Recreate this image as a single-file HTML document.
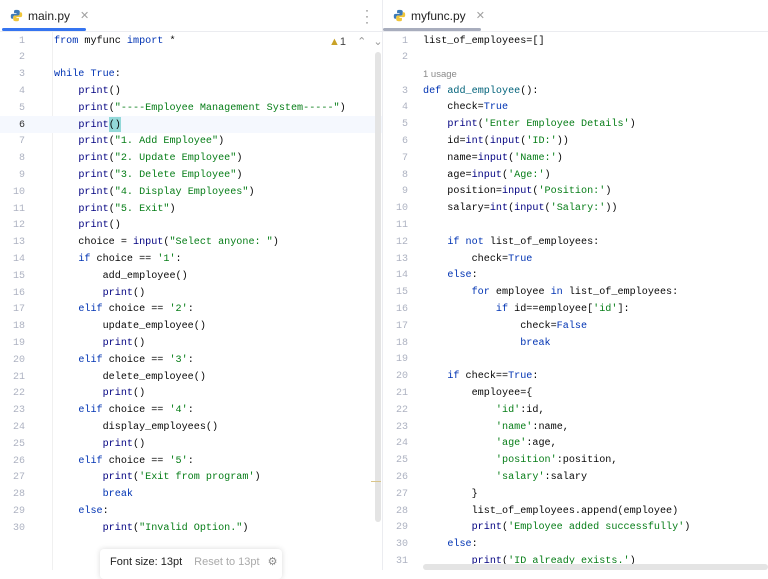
<!DOCTYPE html>
<html><head><meta charset="utf-8"><style>
*{margin:0;padding:0;box-sizing:border-box}
body{width:768px;height:570px;overflow:hidden;background:#fff;position:relative;font-family:"Liberation Sans",sans-serif}
.code{position:absolute;font-family:"Liberation Mono",monospace;font-size:10.15px;line-height:16.8px;white-space:pre;color:#080808}
.num{position:absolute;font-family:"Liberation Mono",monospace;font-size:10px;line-height:16.8px;white-space:pre;color:#aeb3c2;text-align:right}
.k{color:#0033b3}.s{color:#067d17}.p{color:#000080}
.tab{position:absolute;top:0;height:31px;font-size:12px;color:#222;display:flex;align-items:center}
.x{color:#a0a0a0;font-size:11px;margin-left:10px}
</style></head><body>
<!-- tabs -->
<div style="position:absolute;left:0;top:0;width:768px;height:32px;border-bottom:1px solid #ebecf0"></div>
<div class="tab" style="left:10px"><svg width="13" height="13" viewBox="0 0 16 16"><path d="M8 1C5 1 5 2 5 3v2h3v1H3C1 6 1 8 1 9s0 3 2 3h1v-2c0-1 1-2 2-2h4c1 0 2-1 2-2V3c0-1-1-2-4-2z" fill="#3d7ab8"/><path d="M8 15c3 0 3-1 3-2v-2H8v-1h5c2 0 2-2 2-3s0-3-2-3h-1v2c0 1-1 2-2 2H6c-1 0-2 1-2 2v3c0 1 1 2 4 2z" fill="#f0c63a"/></svg><span style="margin-left:5px">main.py</span><span class="x">✕</span></div>
<div style="position:absolute;left:2px;top:28px;width:84px;height:3px;background:#3574f0;border-radius:2px"></div>
<div style="position:absolute;left:364px;top:7px;color:#666;font-size:12px;line-height:6px;width:6px;text-align:center">·<br>·<br>·</div>
<div class="tab" style="left:393px"><svg width="13" height="13" viewBox="0 0 16 16"><path d="M8 1C5 1 5 2 5 3v2h3v1H3C1 6 1 8 1 9s0 3 2 3h1v-2c0-1 1-2 2-2h4c1 0 2-1 2-2V3c0-1-1-2-4-2z" fill="#3d7ab8"/><path d="M8 15c3 0 3-1 3-2v-2H8v-1h5c2 0 2-2 2-3s0-3-2-3h-1v2c0 1-1 2-2 2H6c-1 0-2 1-2 2v3c0 1 1 2 4 2z" fill="#f0c63a"/></svg><span style="margin-left:5px">myfunc.py</span><span class="x">✕</span></div>
<div style="position:absolute;left:383px;top:28px;width:98px;height:3px;background:#a8adbd;border-radius:2px"></div>
<!-- divider -->
<div style="position:absolute;left:382px;top:0;width:1px;height:570px;background:#ebecf0"></div>
<div style="position:absolute;left:52px;top:32px;width:1px;height:538px;background:#f0f0f0"></div>
<!-- current line -->
<div style="position:absolute;left:0;top:116px;width:382px;height:17px;background:#f5f8fe"></div>
<div style="position:absolute;left:109px;top:117px;width:12px;height:15px;background:#93d9d9"></div>
<!-- scrollbar -->
<div style="position:absolute;left:375px;top:52px;width:6px;height:470px;background:#e4e4e4;border-radius:3px"></div>
<div style="position:absolute;left:371px;top:481px;width:10px;height:1px;background:#d9c58a"></div>
<!-- warning -->
<div style="position:absolute;left:329px;top:35px;font-size:11px;color:#444"><span style="color:#c9a227">▲</span>1 <span style="color:#999;margin-left:8px">⌃</span> <span style="color:#999;margin-left:4px">⌄</span></div>
<!-- left numbers -->
<div class="num" style="left:0;top:33.6px;width:25px">1
2
3
4
5
<span style="color:#333">6</span>
7
8
9
10
11
12
13
14
15
16
17
18
19
20
21
22
23
24
25
26
27
28
29
30</div>
<div class="code" style="left:54px;top:33.6px"><span class="k">from</span> myfunc <span class="k">import</span> *

<span class="k">while True</span>:
    <span class="p">print</span>()
    <span class="p">print</span>(<span class="s">"----Employee Management System-----"</span>)
    <span class="p">print</span>()
    <span class="p">print</span>(<span class="s">"1. Add Employee"</span>)
    <span class="p">print</span>(<span class="s">"2. Update Employee"</span>)
    <span class="p">print</span>(<span class="s">"3. Delete Employee"</span>)
    <span class="p">print</span>(<span class="s">"4. Display Employees"</span>)
    <span class="p">print</span>(<span class="s">"5. Exit"</span>)
    <span class="p">print</span>()
    choice = <span class="p">input</span>(<span class="s">"Select anyone: "</span>)
    <span class="k">if</span> choice == <span class="s">'1'</span>:
        add_employee()
        <span class="p">print</span>()
    <span class="k">elif</span> choice == <span class="s">'2'</span>:
        update_employee()
        <span class="p">print</span>()
    <span class="k">elif</span> choice == <span class="s">'3'</span>:
        delete_employee()
        <span class="p">print</span>()
    <span class="k">elif</span> choice == <span class="s">'4'</span>:
        display_employees()
        <span class="p">print</span>()
    <span class="k">elif</span> choice == <span class="s">'5'</span>:
        <span class="p">print</span>(<span class="s">'Exit from program'</span>)
        <span class="k">break</span>
    <span class="k">else</span>:
        <span class="p">print</span>(<span class="s">"Invalid Option."</span>)</div>
<!-- font size popup -->
<div style="position:absolute;left:100px;top:549px;width:182px;height:30px;background:#fff;border-radius:4px;box-shadow:0 0 6px rgba(0,0,0,0.15);font-size:11px;padding:6px 10px;white-space:nowrap"><span style="color:#222">Font size: 13pt</span><span style="color:#aaa;margin-left:12px">Reset to 13pt</span><span style="color:#888;margin-left:8px">⚙</span></div>
<!-- right numbers -->
<div class="num" style="left:385px;top:33.6px;width:23px">1
2</div>
<div style="position:absolute;left:423px;top:69px;font-size:9.5px;color:#8a8a8a">1 usage</div>
<div class="num" style="left:385px;top:83.6px;width:23px">3
4
5
6
7
8
9
10
11
12
13
14
15
16
17
18
19
20
21
22
23
24
25
26
27
28
29
30
31</div>
<div class="code" style="left:423px;top:33.6px">list_of_employees=[]
</div>
<div class="code" style="left:423px;top:83.6px"><span class="k">def</span> <span style="color:#00627a">add_employee</span>():
    check=<span class="k">True</span>
    <span class="p">print</span>(<span class="s">'Enter Employee Details'</span>)
    id=<span class="p">int</span>(<span class="p">input</span>(<span class="s">'ID:'</span>))
    name=<span class="p">input</span>(<span class="s">'Name:'</span>)
    age=<span class="p">input</span>(<span class="s">'Age:'</span>)
    position=<span class="p">input</span>(<span class="s">'Position:'</span>)
    salary=<span class="p">int</span>(<span class="p">input</span>(<span class="s">'Salary:'</span>))

    <span class="k">if not</span> list_of_employees:
        check=<span class="k">True</span>
    <span class="k">else</span>:
        <span class="k">for</span> employee <span class="k">in</span> list_of_employees:
            <span class="k">if</span> id==employee[<span class="s">'id'</span>]:
                check=<span class="k">False</span>
                <span class="k">break</span>

    <span class="k">if</span> check==<span class="k">True</span>:
        employee={
            <span class="s">'id'</span>:id,
            <span class="s">'name'</span>:name,
            <span class="s">'age'</span>:age,
            <span class="s">'position'</span>:position,
            <span class="s">'salary'</span>:salary
        }
        list_of_employees.append(employee)
        <span class="p">print</span>(<span class="s">'Employee added successfully'</span>)
    <span class="k">else</span>:
        <span class="p">print</span>(<span class="s">'ID already exists.'</span>)</div>
<div style="position:absolute;left:423px;top:564px;width:345px;height:6px;background:#e4e4e4;border-radius:3px"></div>
</body></html>
